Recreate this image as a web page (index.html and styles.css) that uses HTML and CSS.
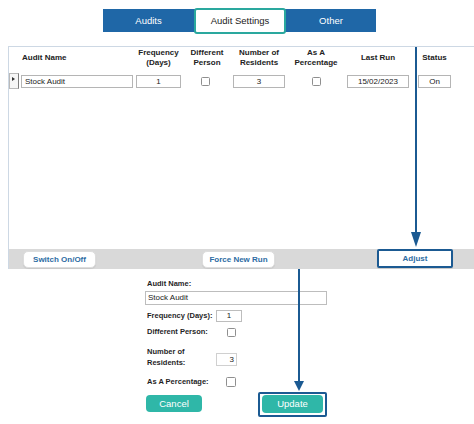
FILE: index.html
```html
<!DOCTYPE html>
<html>
<head>
<meta charset="utf-8">
<link rel="stylesheet" href="styles.css">
</head>
<body>
<div class="tabs-wrap">
  <div class="tabs">
    <div class="tab">Audits</div>
    <div class="tab active">Audit Settings</div>
    <div class="tab">Other</div>
  </div>
</div>

<div class="panel">
  <div class="grid head">
    <div></div>
    <div class="h-left">Audit Name</div>
    <div>Frequency<br>(Days)</div>
    <div>Different<br>Person</div>
    <div>Number of<br>Residents</div>
    <div>As A<br>Percentage</div>
    <div>Last Run</div>
    <div>Status</div>
  </div>
  <div class="grid row">
    <div class="selector"><span class="tri"></span></div>
    <div class="field left">Stock Audit</div>
    <div class="field">1</div>
    <div class="cell"><span class="cb"></span></div>
    <div class="field">3</div>
    <div class="cell pct"><span class="cb"></span></div>
    <div class="field">15/02/2023</div>
    <div class="field">On</div>
  </div>
  <div class="bar">
    <div class="btn b-switch">Switch On/Off</div>
    <div class="btn b-force">Force New Run</div>
    <div class="btn b-adjust">Adjust</div>
  </div>
</div>

<div class="form">
  <div class="lbl">Audit Name:</div>
  <div class="fld fld-name">Stock Audit</div>
  <div class="frow r-freq">
    <div class="lbl">Frequency (Days):</div>
    <div class="fld fld-freq">1</div>
  </div>
  <div class="frow r-diff">
    <div class="lbl">Different Person:</div>
    <span class="cb cb-form"></span>
  </div>
  <div class="frow r-num">
    <div class="lbl two">Number of<br>Residents:</div>
    <div class="fld fld-num">3</div>
  </div>
  <div class="frow r-pct">
    <div class="lbl">As A Percentage:</div>
    <span class="cb cb-form cb-pct"></span>
  </div>
  <div class="actions">
    <div class="tbtn cancel">Cancel</div>
    <div class="update-box"><div class="tbtn">Update</div></div>
  </div>
</div>

<svg class="arrow a1" width="12" height="200" viewBox="0 0 12 200">
  <line x1="6" y1="0" x2="6" y2="188" stroke="#1b5a92" stroke-width="2"/>
  <polygon points="1,185 11,185 6,200" fill="#1b5a92"/>
</svg>
<svg class="arrow a2" width="12" height="123" viewBox="0 0 12 123">
  <line x1="6" y1="0" x2="6" y2="114" stroke="#1b5a92" stroke-width="2"/>
  <polygon points="1,112 11,112 6,122" fill="#1b5a92"/>
</svg>
</body>
</html>
```

FILE: styles.css
```css
html, body {
  margin: 0;
  padding: 0;
  background: #ffffff;
}
body {
  position: relative;
  width: 474px;
  height: 424px;
  overflow: hidden;
  font-family: "Liberation Sans", Arial, sans-serif;
  color: #1f1f1f;
}

/* Tabs */
.tabs-wrap {
  padding-top: 9px;
  padding-left: 103px;
}
.tabs {
  display: flex;
  align-items: flex-start;
  width: 273px;
  height: 23px;
  background: #1f67a7;
}
.tab {
  box-sizing: border-box;
  height: 23px;
  line-height: 23px;
  text-align: center;
  color: #ffffff;
  font-size: 9.5px;
}
.tab:first-child { width: 91px; }
.tab:last-child { width: 90px; }
.tab.active {
  width: 92px;
  height: 26px;
  margin-top: -1px;
  line-height: 22px;
  background: #ffffff;
  color: #222222;
  border: 2px solid #2aa89e;
  border-radius: 3px;
}

/* Panel */
.panel {
  box-sizing: border-box;
  margin-top: 14px;
  margin-left: 8px;
  height: 223px;
  border-top: 1px solid #cdd8e4;
  border-left: 1px solid #cdd8e4;
  display: flex;
  flex-direction: column;
}
.grid {
  display: grid;
  grid-template-columns: 12px 115px 45px 52px 52px 62px 71px 33px;
}
.head {
  height: 22px;
  align-items: center;
  font-size: 8px;
  font-weight: bold;
  line-height: 10.5px;
  text-align: center;
  color: #222222;
}
.head > div:nth-child(7) { width: 62px; }
.head > div:nth-child(8) { width: 33px; }
.head .h-left {
  text-align: left;
  padding-left: 1px;
}
.row {
  margin-top: 5px;
  height: 13px;
  align-items: center;
}
.selector {
  box-sizing: border-box;
  width: 10px;
  height: 16px;
  margin-top: -1px;
  border: 1px solid #b9b9b9;
  border-right-color: #7d7d7d;
  background: #f6f6f6;
  position: relative;
}
.tri {
  position: absolute;
  left: 2px;
  top: 3px;
  width: 0;
  height: 0;
  border-top: 2.5px solid transparent;
  border-bottom: 2.5px solid transparent;
  border-left: 3px solid #333333;
}
.field {
  box-sizing: border-box;
  height: 13px;
  line-height: 11px;
  border: 1px solid #b5b5b5;
  font-size: 8px;
  text-align: center;
  color: #222222;
  background: #ffffff;
}
.row .field:nth-child(2) { width: 112px; }
.row .field:nth-child(7) { width: 62px; }
.row .field:nth-child(8) { width: 33px; }
.field.left {
  text-align: left;
  padding-left: 3px;
}
.cell {
  display: flex;
  justify-content: center;
  align-items: center;
  padding-right: 4px;
}
.cell.pct {
  padding-right: 0;
}
.cb {
  display: inline-block;
  box-sizing: border-box;
  width: 9px;
  height: 9px;
  border: 1px solid #8f8f8f;
  border-radius: 1.5px;
  background: #ffffff;
}

/* Grey bar */
.bar {
  margin-top: auto;
  height: 20px;
  background: #d9d9d9;
  display: flex;
  align-items: center;
}
.btn {
  box-sizing: border-box;
  height: 17px;
  line-height: 16px;
  width: 73px;
  text-align: center;
  background: #ffffff;
  border: 1px solid #dddddd;
  border-radius: 5px;
  color: #2d6ca3;
  font-size: 8px;
  font-weight: bold;
  box-shadow: 0 1px 1px rgba(0,0,0,0.08);
}
.b-switch { margin-left: 14px; }
.b-force { margin-left: 106px; }
.b-adjust {
  margin-left: 102px;
  width: 76px;
  height: 19px;
  line-height: 15px;
  border: 2px solid #1b5a92;
  border-radius: 2px;
  margin-top: -1px;
}

/* Form */
.form {
  margin-left: 145px;
  width: 182px;
  padding-top: 10px;
  font-size: 8px;
}
.lbl {
  font-weight: bold;
  font-size: 7.5px;
  line-height: 10px;
  padding-left: 2px;
  white-space: nowrap;
  color: #1f1f1f;
}
.lbl.two { line-height: 10.5px; }
.fld {
  box-sizing: border-box;
  border: 1px solid #bdbdbd;
  background: #ffffff;
  color: #222222;
  font-size: 8px;
}
.fld-name {
  margin-top: 2px;
  height: 14px;
  line-height: 12px;
  padding-left: 2px;
}
.frow {
  display: grid;
  grid-template-columns: 71px auto;
  align-items: center;
  justify-items: start;
}
.r-freq { margin-top: 5px; height: 12px; }
.fld-freq {
  width: 26px;
  height: 12px;
  line-height: 10px;
  text-align: center;
}
.r-diff { margin-top: 5px; height: 10px; }
.cb-form { margin-left: 11px; }
.cb-pct { margin-left: 10px; width: 10px; height: 10px; }
.r-num { margin-top: 10px; height: 21px; }
.fld-num {
  width: 21px;
  height: 13px;
  line-height: 11px;
  text-align: right;
  padding-right: 2px;
  margin-top: 3px;
  border-color: #d0d0d0;
}
.r-pct { margin-top: 9px; height: 10px; }
.actions {
  margin-top: 5px;
  display: flex;
  align-items: flex-start;
}
.tbtn {
  width: 61px;
  height: 18px;
  line-height: 18px;
  text-align: center;
  background: #2fb7a8;
  color: #ffffff;
  font-size: 9.5px;
  border-radius: 4px;
}
.cancel {
  margin-top: 3px;
  margin-left: 1px;
  height: 17px;
  line-height: 17px;
}
.update-box {
  box-sizing: border-box;
  margin-left: 56px;
  width: 69px;
  height: 25px;
  border: 2px solid #1b5a92;
  border-radius: 2px;
  padding: 1px 2px;
}

/* Annotation arrows */
.arrow {
  position: absolute;
  display: block;
}
.a1 { left: 410px; top: 47px; }
.a2 { left: 293px; top: 269px; }
```
